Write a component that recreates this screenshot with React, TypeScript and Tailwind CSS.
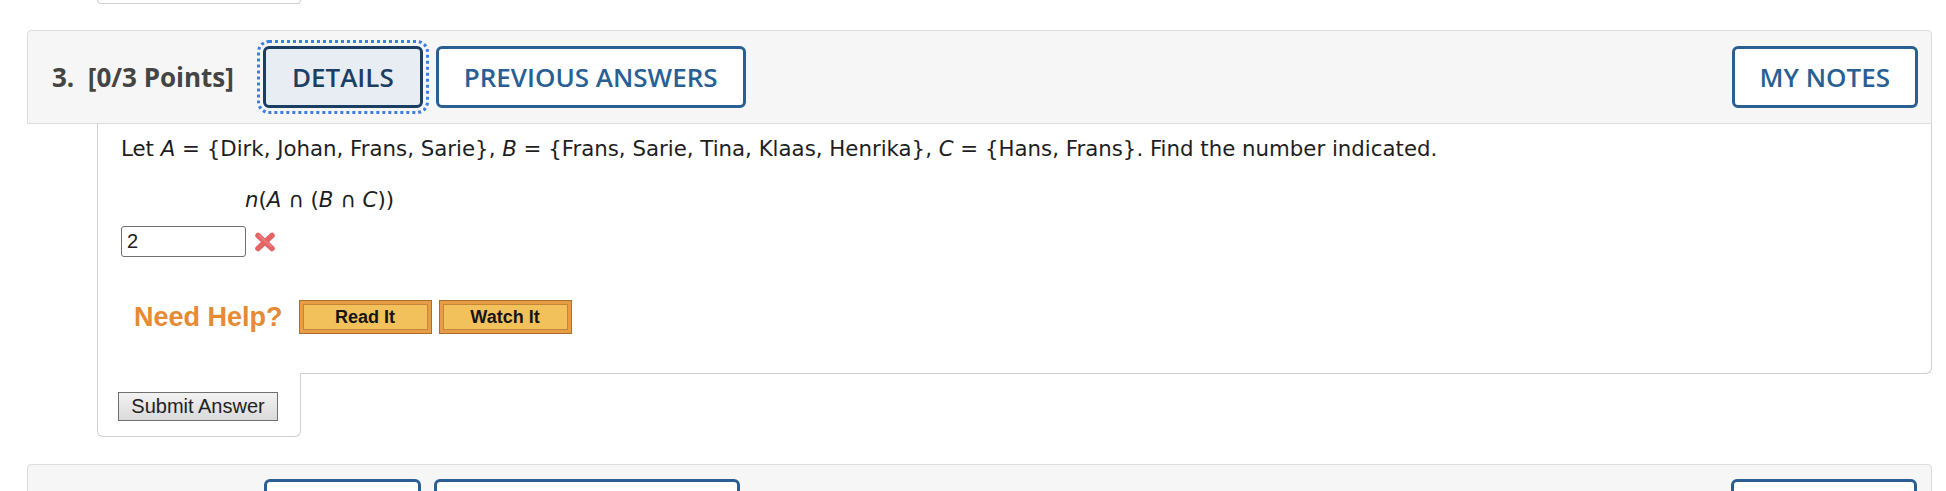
import React from "react";

const sans = { fontFamily: '"Open Sans", "Noto Sans", sans-serif' };
const arial = { fontFamily: '"Liberation Sans", Arial, sans-serif' };

function HeaderButton({
  label,
  active = false,
}: {
  label: string;
  active?: boolean;
}) {
  return (
    <button
      type="button"
      style={sans}
      className={
        active
          ? "h-[62px] rounded-[6px] border-[3px] border-[#1b3e63] bg-[#e7edf2] px-[26px] text-[26px] font-semibold text-[#1b3e63] outline-[3px] outline-offset-[3px] outline-dotted outline-[#3d7fe0]"
          : "h-[62px] rounded-[6px] border-[3px] border-[#2a5f94] bg-white px-[25px] text-[26px] font-semibold text-[#2a5f94]"
      }
    >
      {label}
    </button>
  );
}

function QuestionHeader() {
  return (
    <div className="flex h-[94px] items-center rounded-t-[4px] border border-[#dcdcdc] bg-[#f6f6f6] pl-[24px] pr-[13px]">
      <span style={sans} className="mr-[29px] whitespace-pre text-[26px] font-bold text-[#444]">
        3.{"  "}[0/3 Points]
      </span>
      <HeaderButton label="DETAILS" active />
      <div className="w-[13px]" />
      <HeaderButton label="PREVIOUS ANSWERS" />
      <div className="ml-auto">
        <HeaderButton label="MY NOTES" />
      </div>
    </div>
  );
}

// only the top edge of the next question shows, so its buttons are bare outlines
function NextHeader() {
  return (
    <div className="flex h-[94px] items-start rounded-t-[4px] border border-[#dcdcdc] bg-[#f6f6f6] pr-[14px] pt-[14px]">
      <div className="ml-[236px] h-[62px] w-[157px] rounded-[6px] border-[3px] border-[#2a5f94] bg-white" />
      <div className="ml-[13px] h-[62px] w-[306px] rounded-[6px] border-[3px] border-[#2a5f94] bg-white" />
      <div className="ml-auto h-[62px] w-[186px] rounded-[6px] border-[3px] border-[#2a5f94] bg-white" />
    </div>
  );
}

function HelpButton({ label }: { label: string }) {
  return (
    <button
      type="button"
      className="flex h-[34px] w-[133px] border border-[#a8702f] bg-[#e89c45] p-[3px]"
    >
      <span
        style={arial}
        className="flex h-full w-full items-center justify-center border border-[#c4873a] bg-[#f3c15c] text-[18px] font-bold text-[#151515]"
      >
        {label}
      </span>
    </button>
  );
}

function WrongMark() {
  return (
    <svg width="22" height="20" viewBox="0 0 22 20" className="ml-[8px]">
      <g stroke="#e46464" strokeWidth="5.5" strokeLinecap="round">
        <line x1="4" y1="3.5" x2="18" y2="16.5" />
        <line x1="18" y1="3.5" x2="4" y2="16.5" />
      </g>
      <g stroke="#f29a9a" strokeWidth="1.5" strokeLinecap="round" opacity="0.6">
        <line x1="5" y1="3.5" x2="17" y2="14.5" />
      </g>
    </svg>
  );
}

export default function App() {
  const body = { fontFamily: '"DejaVu Sans", Verdana, sans-serif' };

  return (
    <div className="h-[491px] overflow-hidden bg-white pl-[27px] pr-[14px]">
      {/* tail of the previous question */}
      <div className="ml-[70px] h-[4px] w-[204px] rounded-b-[6px] border-x border-b border-[#cfcfcf]" />

      <div className="mt-[26px]">
        <QuestionHeader />

        <div className="ml-[70px] rounded-br-[6px] border-x border-b border-[#cfcfcf] pb-[35px] pl-[23px] pt-[10px]">
          <p style={body} className="text-[21.3px] leading-[30px] text-[#1e1e1e]">
            Let <i>A</i> = {"{"}Dirk, Johan, Frans, Sarie{"}"}, <i>B</i> = {"{"}Frans, Sarie,
            Tina, Klaas, Henrika{"}"}, <i>C</i> = {"{"}Hans, Frans{"}"}. Find the number
            indicated.
          </p>
          <p style={body} className="mt-[21px] pl-[124px] text-[21.3px] leading-[30px] text-[#1e1e1e]">
            <i>n</i>(<i>A</i> ∩ (<i>B</i> ∩ <i>C</i>))
          </p>
          <div className="mt-[11px] flex items-center">
            <input
              readOnly
              value="2"
              style={arial}
              className="h-[31px] w-[125px] rounded-[3px] border border-[#6f6f6f] px-[5px] text-[20px] text-[#222]"
            />
            <WrongMark />
          </div>
          <div className="mt-[40px] flex items-center pl-[13px]">
            <span style={arial} className="mr-[16px] text-[27px] font-bold text-[#e68a33]">
              Need Help?
            </span>
            <HelpButton label="Read It" />
            <div className="w-[7px]" />
            <HelpButton label="Watch It" />
          </div>
        </div>

        <div className="relative z-10 ml-[70px] -mt-px flex h-[64px] w-[204px] items-start rounded-b-[6px] border-x border-b border-[#cfcfcf] bg-white pl-[20px] pt-[19px]">
          <button
            type="button"
            style={arial}
            className="h-[29px] w-[160px] border border-[#707070] bg-gradient-to-b from-[#f2f2f2] to-[#dadada] text-[20px] leading-none text-[#222]"
          >
            Submit Answer
          </button>
        </div>
      </div>

      <div className="mt-[27px]">
        <NextHeader />
      </div>
    </div>
  );
}
